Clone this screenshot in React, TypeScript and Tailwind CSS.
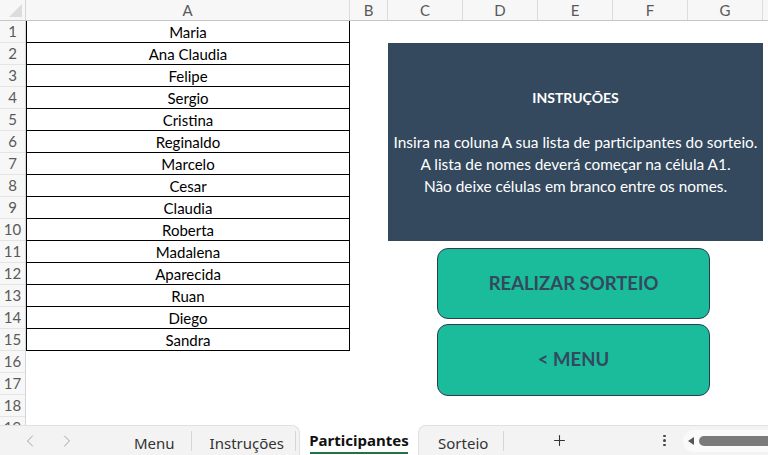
import { Plus, ChevronLeft, ChevronRight } from 'lucide-react';

const names = [
  'Maria', 'Ana Claudia', 'Felipe', 'Sergio', 'Cristina', 'Reginaldo', 'Marcelo', 'Cesar',
  'Claudia', 'Roberta', 'Madalena', 'Aparecida', 'Ruan', 'Diego', 'Sandra',
];

const cols = [
  { label: 'A', w: 'w-[324px]' },
  { label: 'B', w: 'w-[38px]' },
  { label: 'C', w: 'w-[75px]' },
  { label: 'D', w: 'w-[75px]' },
  { label: 'E', w: 'w-[75px]' },
  { label: 'F', w: 'w-[75px]' },
  { label: 'G', w: 'w-[75px]' },
];

const ColumnHeader = () => (
  <div className="flex h-[21px] border-b border-[#c6c6c6] bg-[#f7f7f7] text-[15px] text-[#595959]">
    <div className="relative w-[26px] shrink-0 border-r border-[#d4d4d4]">
      <div className="absolute bottom-[3px] right-[3px] h-0 w-0 border-b-[13px] border-l-[13px] border-b-[#dcdcdc] border-l-transparent" />
    </div>
    {cols.map((c) => (
      <div key={c.label} className={`${c.w} flex shrink-0 items-center justify-center border-r border-[#dcdcdc] leading-none`}>
        {c.label}
      </div>
    ))}
    <div className="flex-1" />
  </div>
);

const RowNumbers = () => (
  <div className="w-[26px] shrink-0 border-r border-[#d4d4d4] bg-[#f7f7f7] text-[15px] text-[#595959]">
    {Array.from({ length: 19 }, (_, i) => (
      <div key={i} className="flex h-[22px] items-center justify-center border-b border-[#e4e4e4] leading-none">
        {i + 1}
      </div>
    ))}
  </div>
);

const NameColumn = () => (
  <div className="w-[324px] shrink-0">
    {names.map((n) => (
      <div key={n} className="flex h-[22px] items-center justify-center border-x border-b border-black pt-[1px] text-[15px] leading-none text-black">
        {n}
      </div>
    ))}
  </div>
);

const ActionButton = ({ label, className }: { label: string; className?: string }) => (
  <button className={`ml-[49px] flex w-[273px] items-center justify-center rounded-[11px] border-[1.5px] border-[#2b3e50] bg-[#1abc9c] text-[18.5px] font-bold text-[#34495e] ${className ?? ''}`}>
    {label}
  </button>
);

const TabBar = () => (
  <div className="flex h-[30px] text-[15px] text-[#333]" style={{ fontFamily: '"Noto Sans", "Open Sans", sans-serif' }}>
    <div className="flex w-[300px] items-center rounded-tr-[8px] border-r border-t border-[#e1e1e1] bg-[#f3f3f3]">
      <ChevronLeft className="ml-[20px] h-[20px] w-[20px] text-[#9a9a9a]" strokeWidth={1.1} />
      <ChevronRight className="ml-[17px] h-[20px] w-[20px] text-[#9a9a9a]" strokeWidth={1.1} />
      <span className="ml-[57px] pt-[6px]">Menu</span>
      <div className="ml-[16px] h-[20px] w-px bg-[#d6d6d6]" />
      <span className="ml-[18px] pt-[6px]">Instruções</span>
      <div className="ml-[11px] h-[20px] w-px bg-[#d6d6d6]" />
    </div>
    <div className="relative flex w-[118px] items-start justify-center bg-white">
      <span className="mt-[4px] font-bold text-[#111]">Participantes</span>
      <div className="absolute bottom-[1px] left-[10px] h-[2px] w-[98px] bg-[#217346]" />
    </div>
    <div className="flex flex-1 items-center rounded-tl-[8px] border-l border-t border-[#e1e1e1] bg-[#f3f3f3]">
      <span className="ml-[19px] pt-[6px]">Sorteio</span>
      <div className="ml-[15px] h-[20px] w-px bg-[#d6d6d6]" />
      <Plus className="ml-[47px] h-[17px] w-[17px] text-[#333]" strokeWidth={1.5} />
      <div className="ml-[95px] flex flex-col gap-[2px]">
        <span className="h-[2.5px] w-[2.5px] rounded-full bg-[#444]" />
        <span className="h-[2.5px] w-[2.5px] rounded-full bg-[#444]" />
        <span className="h-[2.5px] w-[2.5px] rounded-full bg-[#444]" />
      </div>
      <div className="ml-[17px] flex h-[22px] flex-1 items-center rounded-l-full bg-[#fafafa] pl-[5px]">
        <div className="h-0 w-0 border-y-[4px] border-r-[6px] border-y-transparent border-r-[#555]" />
        <div className="ml-[5px] h-[10px] flex-1 rounded-l-full bg-[#7a7a7a]" />
      </div>
    </div>
  </div>
);

export default function App() {
  return (
    <div className="flex h-[455px] w-[768px] flex-col overflow-hidden bg-white" style={{ fontFamily: 'Lato, "Noto Sans", sans-serif' }}>
      <ColumnHeader />
      <div className="flex h-[404px] overflow-hidden">
        <RowNumbers />
        <NameColumn />
        <div className="w-[38px] shrink-0" />
        <div className="flex flex-col">
          <div className="mt-[22px] flex h-[198px] w-[375px] flex-col items-center justify-center bg-[#34495e] text-center text-[15.4px] leading-[22px] text-white">
            <div className="text-[14px] font-bold">INSTRUÇÕES</div>
            <div className="h-[22px]" />
            <div>Insira na coluna A sua lista de participantes do sorteio.</div>
            <div>A lista de nomes deverá começar na célula A1.</div>
            <div>Não deixe células em branco entre os nomes.</div>
          </div>
          <ActionButton label="REALIZAR SORTEIO" className="mt-[7px] h-[71px]" />
          <ActionButton label="< MENU" className="mt-[5px] h-[72px]" />
        </div>
      </div>
      <TabBar />
    </div>
  );
}
